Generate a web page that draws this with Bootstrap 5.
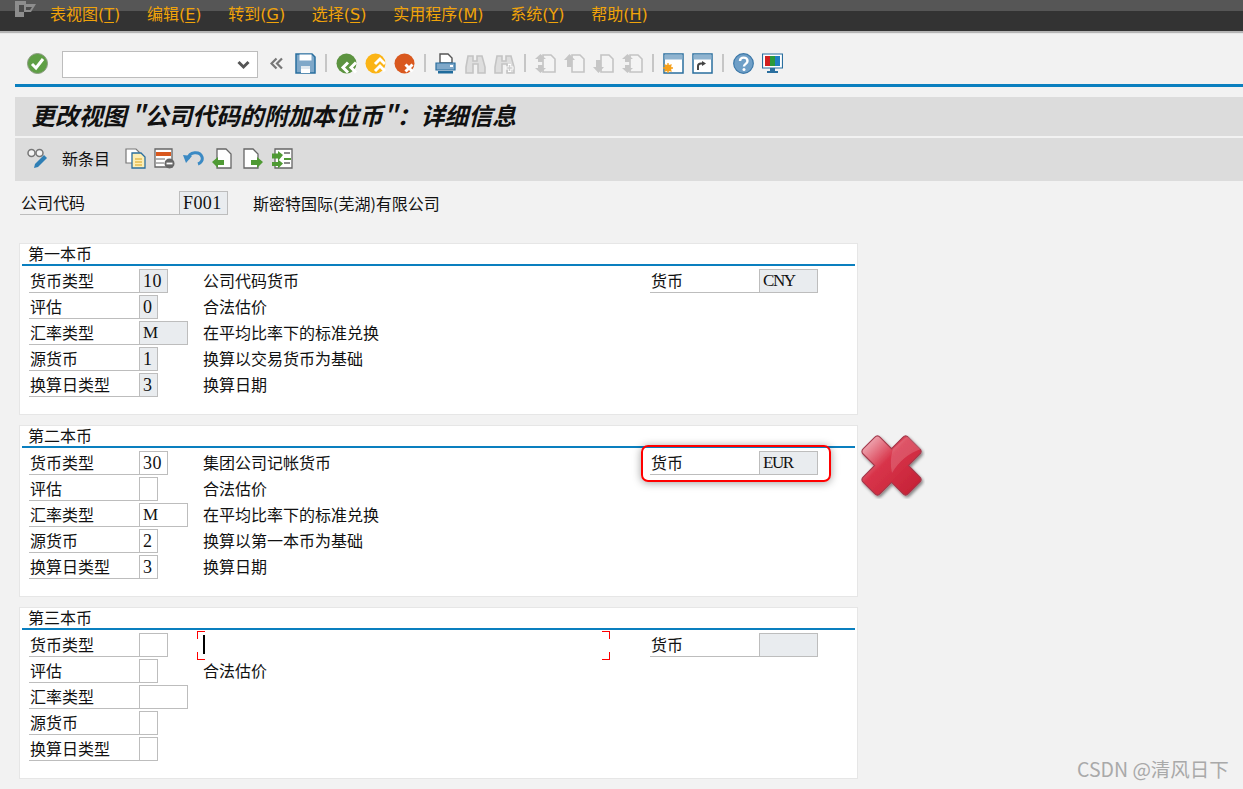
<!DOCTYPE html>
<html lang="zh">
<head>
<meta charset="utf-8">
<title>更改视图</title>
<link href="https://cdn.jsdelivr.net/npm/bootstrap@5.3.0/dist/css/bootstrap.min.css" rel="stylesheet">
<style>
html,body{height:100%;}
body{background:#f2f2f2;font-family:"Noto Sans CJK SC","Liberation Sans",sans-serif;font-size:16px;line-height:24px;color:#111;overflow:hidden;position:relative;}
.sap-top{height:31px;background:linear-gradient(#565656 0,#565656 11px,#333 11px,#333 100%);box-shadow:0 2px 1px #b5b5b5;padding-left:15px;position:relative;font-family:"DejaVu Sans","Noto Sans CJK SC",sans-serif;}
.sap-top .sap-logo{width:21px;height:16px;margin-top:1px;margin-right:14px;flex:none;}
.sap-top a{color:#f0a30a;text-decoration:none;margin-right:26.7px;line-height:29px;white-space:nowrap;}
.sap-top u{text-underline-offset:2px;}
.sap-tools{height:56px;margin-left:15px;border-bottom:3px solid #0a7fbf;padding:11px 0 0 12px;}
.sap-tools svg,.sap-bar2 svg{width:21px;height:21px;flex:none;display:block;}
.sap-tools .ic{margin-right:8px;}
.sap-tools .ic.wide{margin-right:9px;}
.sap-tools .sp{width:2px;height:18px;background:#c6c6c6;margin:0 9px 0 1px;flex:none;}
.sap-tools .back{width:13px;margin-right:12px;}
.sap-combo{width:196px;height:27px;padding:0 6px;margin:3px 12px 0 14px;border:1px solid #bdbdbd;border-radius:0;background-position:right 7px center;background-size:13px 10px;background-image:url("data:image/svg+xml,%3csvg xmlns='http://www.w3.org/2000/svg' viewBox='0 0 13 10'%3e%3cpath d='M1.5 2l5 5 5-5' fill='none' stroke='%23555' stroke-width='3'/%3e%3c/svg%3e");flex:none;}
.sap-title{height:39px;margin:10px 0 2px 15px;background:#dcdcdc;padding-left:16px;font-style:italic;font-weight:700;font-size:24px;line-height:36px;color:#111;font-family:"Noto Sans CJK SC",sans-serif;white-space:nowrap;word-spacing:-1px;letter-spacing:-.15px;}
.sap-bar2{height:43px;margin-left:15px;background:#dcdcdc;padding:0 0 3px 12px;}
.sap-bar2 .ic{margin-right:8px;}
.sap-bar2 .ic.wide{margin-right:10px;}
.sap-bar2 .txt{margin:0 15px 0 6px;width:48px;white-space:nowrap;}
.sap-head{height:24px;margin:10px 0 28px 20px;}
.sap-company{margin-left:25px;white-space:nowrap;line-height:24px;}
.sap-lab{height:24px;padding-left:1px;border-bottom:1px solid #bdbdbd;white-space:nowrap;flex:none;line-height:22px;}
.sap-in{height:24px;padding:0 3px;border:1px solid #bdbdbd;border-radius:0;background:#fff;font-family:"Liberation Serif",serif;font-size:18px;line-height:22px;color:#111;flex:none;box-shadow:none;letter-spacing:.4px;}
.sap-in:focus{border-color:#bdbdbd;box-shadow:none;}
.sap-in.filled{background:#e9ecef;}
.sap-in.tight{font-size:17px;letter-spacing:-1.4px;}
.w19{width:19px;}.w29{width:29px;}.w49{width:49px;}.w59{width:59px;}
.sap-panel{width:839px;height:172px;margin:0 0 10px 19px;background:#fff;border:1px solid #e6e6e6;position:relative;}
.sap-ph{height:22px;margin:0 2px;border-bottom:2px solid #0a7fbf;padding-left:6px;line-height:18px;white-space:nowrap;}
.sap-rows{padding:3px 0 0 9px;}
.sap-row{height:26px;}
.sap-row .l1{width:110px;}
.sap-row .d1{white-space:nowrap;line-height:22px;}
.sap-row .d29{margin-left:35px;width:447px;}
.sap-row .d19{margin-left:45px;}
.sap-row .d49{margin-left:15px;}
.sap-row .l2{width:109px;}
.sap-cursor{width:2px;height:19px;background:#000;margin-top:2px;}
.sap-focus{position:absolute;left:177px;top:23px;width:413px;height:29px;pointer-events:none;background:
 linear-gradient(#f00,#f00) 0 0/8px 1px no-repeat,linear-gradient(#f00,#f00) 0 0/1px 8px no-repeat,
 linear-gradient(#f00,#f00) 100% 0/8px 1px no-repeat,linear-gradient(#f00,#f00) 100% 0/1px 8px no-repeat,
 linear-gradient(#f00,#f00) 0 100%/8px 1px no-repeat,linear-gradient(#f00,#f00) 0 100%/1px 8px no-repeat,
 linear-gradient(#f00,#f00) 100% 100%/8px 1px no-repeat,linear-gradient(#f00,#f00) 100% 100%/1px 8px no-repeat;}
.sap-mark{position:absolute;left:641px;top:445px;width:190px;height:37px;border:2px solid #f00;border-radius:7px;box-shadow:0 1px 9px rgba(0,0,0,.38);}
.sap-x{position:absolute;left:859px;top:433px;width:66px;height:66px;}
.sap-wm{position:absolute;left:1077px;top:757px;font-size:19.5px;line-height:24px;color:#a9a9a9;white-space:nowrap;}
</style>
</head>
<body>
<svg width="0" height="0" class="position-absolute">
<defs>
<symbol id="dg" viewBox="0 0 21 21"><path d="M8 2h8l4 4v13H8z" fill="#f4f4f4" stroke="#c4c4c4" stroke-width="1.600"/></symbol>
<symbol id="bino" viewBox="0 0 21 21"><path d="M3 3h5v5h4V3h5l3 11v6h-7v-9H8v9H1v-6z" fill="#dedede" stroke="#c4c4c4" stroke-width="1.600"/></symbol>
</defs>
</svg>

<div class="sap-top d-flex align-items-start">
  <svg class="sap-logo" viewBox="0 0 21 16"><path d="M0 0h11v3h10l-5 8h-7v5H0z" fill="#8d8d8d"/><path d="M4 4h5v7H4z" fill="#4a4a4a"/><path d="M11 6h6l-2 3h-4z" fill="#4a4a4a"/></svg>
  <a href="#">表视图(<u>T</u>)</a><a href="#">编辑(<u>E</u>)</a><a href="#">转到(<u>G</u>)</a><a href="#">选择(<u>S</u>)</a><a href="#">实用程序(<u>M</u>)</a><a href="#">系统(<u>Y</u>)</a><a href="#">帮助(<u>H</u>)</a>
</div>

<div class="sap-tools d-flex align-items-center">
  <svg viewBox="0 0 21 21"><circle cx="10.500" cy="10.500" r="10" fill="#5f9f45"/><circle cx="10.500" cy="10.500" r="10" fill="none" stroke="#8a9a80"/><path d="M5 11l4 4 7-9" fill="none" stroke="#fff" stroke-width="3"/></svg>
  <select class="form-select sap-combo" aria-label="命令"></select>
  <svg class="ic back" viewBox="0 0 13 21"><path d="M6.500 5.500l-5 5 5 5M12 5.500l-5 5 5 5" fill="none" stroke="#777" stroke-width="2.200"/></svg>
  <svg class="ic" viewBox="0 0 21 21"><path d="M1 1h16l3 3v16H1z" fill="#7fa8c9" stroke="#2a6f9f" stroke-width="1.500"/><path d="M4.500 1.500h12v6h-12z" fill="#fff"/><path d="M6 13h9v7H6z" fill="#fff"/><path d="M6 13h9v3H6z" fill="#dfe8ef"/></svg>
  <span class="sp"></span>
  <svg class="ic" viewBox="0 0 21 21"><circle cx="10.500" cy="10.500" r="10" fill="#5c9340"/><path d="M12 9.500l-5 5 5 5M20 9.500l-5 5 5 5" fill="none" stroke="#fff" stroke-width="3"/></svg>
  <svg class="ic" viewBox="0 0 21 21"><circle cx="10.500" cy="10.500" r="10" fill="#fbb416"/><path d="M10 11l5-5 5 5M10 18l5-5 5 5" fill="none" stroke="#fff" stroke-width="3"/></svg>
  <svg class="ic" viewBox="0 0 21 21"><circle cx="10.500" cy="10.500" r="10" fill="#d9581e"/><path d="M11.500 11.500l7 7M18.500 11.500l-7 7" stroke="#fff" stroke-width="3"/></svg>
  <span class="sp"></span>
  <svg class="ic wide" viewBox="0 0 21 21"><path d="M5 1h8l4 4v5H5z" fill="#fff" stroke="#555" stroke-width="1.400"/><path d="M1 10h19v7H1z" fill="#7fa8c9" stroke="#2a6f9f" stroke-width="1.200"/><path d="M3 18h15v2.500H3z" fill="#1f6b9c"/><path d="M15 12h3v2h-3z" fill="#fff"/></svg>
  <svg class="ic" viewBox="0 0 21 21"><use href="#bino"/></svg>
  <svg class="ic" viewBox="0 0 21 21"><use href="#bino"/><path d="M15.500 11v8M11.500 15h8" stroke="#fff" stroke-width="3"/><path d="M15.500 12v6M12.500 15h6" stroke="#cfcfcf" stroke-width="1.600"/></svg>
  <span class="sp"></span>
  <svg class="ic" viewBox="0 0 21 21"><use href="#dg"/><path d="M5.500 1l5.500 5H8v3H3V6H0zM5.500 20L11 15H8v-3H3v3H0z" fill="#c6c6c6"/></svg>
  <svg class="ic" viewBox="0 0 21 21"><use href="#dg"/><path d="M5.500 1L11 7H8v7H3V7H0z" fill="#c6c6c6"/></svg>
  <svg class="ic" viewBox="0 0 21 21"><use href="#dg"/><path d="M5.500 20L11 14H8V7H3v7H0z" fill="#c6c6c6"/></svg>
  <svg class="ic" viewBox="0 0 21 21"><use href="#dg"/><path d="M5.500 1l5.500 5H8v3H3V6H0zM5.500 20L11 15H8v-3H3v3H0z" fill="#c6c6c6"/></svg>
  <span class="sp"></span>
  <svg class="ic" viewBox="0 0 21 21"><path d="M1 1h19v19H1z" fill="#fff" stroke="#2a6f9f" stroke-width="1.500"/><path d="M1.500 1.500h18v5h-18z" fill="#8fb3cf"/><circle cx="5" cy="15" r="3.500" fill="#f6a01a"/><path d="M5 10v10M0 15h10M1.500 11.500l7 7M8.500 11.500l-7 7" stroke="#f6a01a" stroke-width="1.300"/></svg>
  <svg class="ic" viewBox="0 0 21 21"><path d="M1 1h19v19H1z" fill="#fff" stroke="#2a6f9f" stroke-width="1.500"/><path d="M1.500 1.500h18v5h-18z" fill="#8fb3cf"/><path d="M6 17v-4c0-2 1-2.500 3-2.500h2" fill="none" stroke="#444" stroke-width="2"/><path d="M10 8l4 2.500-4 2.500z" fill="#444"/></svg>
  <span class="sp"></span>
  <svg class="ic" viewBox="0 0 21 21"><circle cx="10.500" cy="10.500" r="9.800" fill="#6f9fc7" stroke="#3c78a8" stroke-width="1.200"/><path d="M7 8c0-4.500 7.500-4.500 7.500 0 0 3-3.500 2.800-3.500 5.500" fill="none" stroke="#fff" stroke-width="2.400"/><circle cx="11" cy="16.500" r="1.500" fill="#fff"/></svg>
  <svg class="ic" viewBox="0 0 21 21"><path d="M.5 1h20v14H.5z" fill="#fff" stroke="#2a6f9f" stroke-width="1.200"/><path d="M3 3h5v10H3z" fill="#d21f1f"/><path d="M8 3h5v10H8z" fill="#2b9a3a"/><path d="M13 3h5v10h-5z" fill="#1f7fc0"/><path d="M8 15h5v3h3v2H5v-2h3z" fill="#2a6f9f"/></svg>
</div>

<div class="sap-title">更改视图 "公司代码的附加本位币"：详细信息</div>

<div class="sap-bar2 d-flex align-items-center">
  <svg class="ic" viewBox="0 0 21 21"><circle cx="4.500" cy="5" r="3.500" fill="#f4f4f4" stroke="#777" stroke-width="1.500"/><circle cx="12.500" cy="5" r="3.500" fill="#f4f4f4" stroke="#777" stroke-width="1.500"/><path d="M7 20l1-4 9-9 3 3-9 9z" fill="#2f7fb5"/></svg>
  <span class="txt">新条目</span>
  <svg class="ic" viewBox="0 0 21 21"><path d="M1 1h10l3 3v11H1z" fill="#fff" stroke="#777" stroke-width="1.200"/><path d="M7 5h9l4 4v11H7z" fill="#fdeeb5" stroke="#2a6f9f" stroke-width="1.300"/><path d="M10 11h7M10 14h7M10 17h7" stroke="#d8a21c"/></svg>
  <svg class="ic" viewBox="0 0 21 21"><path d="M1 1h17v18H1z" fill="#fff" stroke="#666" stroke-width="1.300"/><path d="M2 4h15v4H2z" fill="#d9581e"/><path d="M2 11h9M2 15h8" stroke="#666"/><circle cx="15.500" cy="15.500" r="5" fill="#666"/><path d="M12.500 15.500h6" stroke="#fff" stroke-width="1.800"/></svg>
  <svg class="ic" viewBox="0 0 21 21"><path d="M5 11C6 3 17 3 19 9c1 3-1 6-4 7" fill="none" stroke="#3b8ac4" stroke-width="3"/><path d="M0 7l9 1-6 7z" fill="#3b8ac4"/></svg>
  <svg class="ic wide" viewBox="0 0 21 21"><path d="M5 1h9l5 5v14H5z" fill="#fff" stroke="#666" stroke-width="1.300"/><path d="M0 14l6-5v3h6v5H6v3z" fill="#4f9a34"/></svg>
  <svg class="ic" viewBox="0 0 21 21"><path d="M1 1h9l5 5v14H1z" fill="#fff" stroke="#666" stroke-width="1.300"/><path d="M20 14l-6-5v3H8v5h6v3z" fill="#4f9a34"/></svg>
  <svg class="ic" viewBox="0 0 21 21"><path d="M3 1h17v19H3z" fill="#fff" stroke="#666" stroke-width="1.300"/><path d="M12 5h6" stroke="#666" stroke-width="1.500"/><path d="M12 10h7v2h-7z" fill="#4f9a34"/><path d="M12 15h6" stroke="#666" stroke-width="1.500"/><path d="M11 7L6 3v2.500H0v5h6V13zM11 15.500l-5-4V14H0v4h6v2.500z" fill="#4f9a34"/></svg>
</div>

<div class="sap-head d-flex">
  <div class="sap-lab" style="width:159px">公司代码</div>
  <input class="form-control sap-in filled" style="width:49px" value="F001" readonly aria-label="公司代码">
  <span class="sap-company">斯密特国际(芜湖)有限公司</span>
</div>

<section class="sap-panel">
  <div class="sap-ph">第一本币</div>
  <div class="sap-rows">
    <div class="sap-row d-flex"><div class="sap-lab l1">货币类型</div><input class="form-control sap-in filled w29" value="10" readonly aria-label="货币类型"><div class="d1 d29">公司代码货币</div><div class="sap-lab l2">货币</div><input class="form-control sap-in filled tight w59" value="CNY" readonly aria-label="货币"></div>
    <div class="sap-row d-flex"><div class="sap-lab l1">评估</div><input class="form-control sap-in filled w19" value="0" readonly aria-label="评估"><div class="d1 d19">合法估价</div></div>
    <div class="sap-row d-flex"><div class="sap-lab l1">汇率类型</div><input class="form-control sap-in filled tight w49" value="M" readonly aria-label="汇率类型"><div class="d1 d49">在平均比率下的标准兑换</div></div>
    <div class="sap-row d-flex"><div class="sap-lab l1">源货币</div><input class="form-control sap-in filled w19" value="1" readonly aria-label="源货币"><div class="d1 d19">换算以交易货币为基础</div></div>
    <div class="sap-row d-flex"><div class="sap-lab l1">换算日类型</div><input class="form-control sap-in filled w19" value="3" readonly aria-label="换算日类型"><div class="d1 d19">换算日期</div></div>
  </div>
</section>

<section class="sap-panel">
  <div class="sap-ph">第二本币</div>
  <div class="sap-rows">
    <div class="sap-row d-flex"><div class="sap-lab l1">货币类型</div><input class="form-control sap-in w29" value="30" readonly aria-label="货币类型"><div class="d1 d29">集团公司记帐货币</div><div class="sap-lab l2">货币</div><input class="form-control sap-in filled tight w59" value="EUR" readonly aria-label="货币"></div>
    <div class="sap-row d-flex"><div class="sap-lab l1">评估</div><input class="form-control sap-in w19" readonly aria-label="评估"><div class="d1 d19">合法估价</div></div>
    <div class="sap-row d-flex"><div class="sap-lab l1">汇率类型</div><input class="form-control sap-in tight w49" value="M" readonly aria-label="汇率类型"><div class="d1 d49">在平均比率下的标准兑换</div></div>
    <div class="sap-row d-flex"><div class="sap-lab l1">源货币</div><input class="form-control sap-in w19" value="2" readonly aria-label="源货币"><div class="d1 d19">换算以第一本币为基础</div></div>
    <div class="sap-row d-flex"><div class="sap-lab l1">换算日类型</div><input class="form-control sap-in w19" value="3" readonly aria-label="换算日类型"><div class="d1 d19">换算日期</div></div>
  </div>
</section>

<section class="sap-panel">
  <div class="sap-ph">第三本币</div>
  <div class="sap-focus"></div>
  <div class="sap-rows">
    <div class="sap-row d-flex"><div class="sap-lab l1">货币类型</div><input class="form-control sap-in w29" readonly aria-label="货币类型"><div class="d1 d29"><div class="sap-cursor"></div></div><div class="sap-lab l2">货币</div><input class="form-control sap-in filled w59" readonly aria-label="货币"></div>
    <div class="sap-row d-flex"><div class="sap-lab l1">评估</div><input class="form-control sap-in w19" readonly aria-label="评估"><div class="d1 d19">合法估价</div></div>
    <div class="sap-row d-flex"><div class="sap-lab l1">汇率类型</div><input class="form-control sap-in w49" readonly aria-label="汇率类型"></div>
    <div class="sap-row d-flex"><div class="sap-lab l1">源货币</div><input class="form-control sap-in w19" readonly aria-label="源货币"></div>
    <div class="sap-row d-flex"><div class="sap-lab l1">换算日类型</div><input class="form-control sap-in w19" readonly aria-label="换算日类型"></div>
  </div>
</section>

<div class="sap-mark"></div>
<svg class="sap-x" viewBox="0 0 66 66">
  <defs>
    <linearGradient id="xg" x1="0" y1="0" x2="1" y2="1"><stop offset="0" stop-color="#f6ccd2"/><stop offset=".42" stop-color="#d8344a"/><stop offset="1" stop-color="#c21f33"/></linearGradient>
    <filter id="xs" x="-20%" y="-20%" width="140%" height="140%"><feDropShadow dx="1.500" dy="2" stdDeviation="1.500" flood-color="#000" flood-opacity=".45"/></filter>
  </defs>
  <path d="M15 3c2-2 4-2 6 0l12 12L45 3c2-2 4-2 6 0l12 12c2 2 2 4 0 6L51 33l12 12c2 2 2 4 0 6L51 63c-2 2-4 2-6 0L33 51 21 63c-2 2-4 2-6 0L3 51c-2-2-2-4 0-6l12-12L3 21c-2-2-2-4 0-6z" transform="translate(1.500 1.500) scale(.94)" fill="url(#xg)" stroke="#a33a4c" stroke-width="1.200" filter="url(#xs)"/>
  <path d="M34 16L46 5c2-1.500 3-1.500 5 0l11 11C50 20 40 28 33 40 31 30 32 22 34 16z" fill="#fff" opacity=".16"/>
</svg>
<div class="sap-wm">CSDN @清风日下</div>
</body>
</html>
